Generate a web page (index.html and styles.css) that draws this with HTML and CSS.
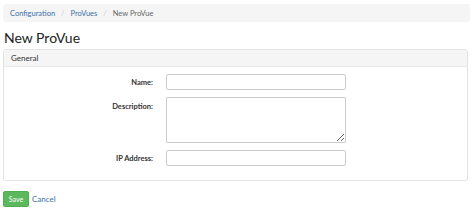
FILE: index.html
```html
<!DOCTYPE html>
<html>
    <head>
        <title>New ProVue</title>
        <link rel="stylesheet" href="styles.css">
    </head>
    <body>
        <ul class="breadcrumb">
            <li><a href="#">Configuration</a></li>
            <li class="sep">/</li>
            <li><a href="#">ProVues</a></li>
            <li class="sep">/</li>
            <li class="active">New ProVue</li>
        </ul>

        <h1>New ProVue</h1>

        <form>
            <div class="panel">
                <div class="panel-heading">General</div>
                <div class="panel-body">
                    <label for="name">Name:</label>
                    <input id="name" type="text">

                    <label for="desc" class="top">Description:</label>
                    <textarea id="desc"></textarea>

                    <label for="ip">IP Address:</label>
                    <input id="ip" type="text">
                </div>
            </div>

            <div class="actions">
                <button type="submit" class="btn-save">Save</button>
                <a href="#" class="cancel">Cancel</a>
            </div>
        </form>
    </body>
</html>
```

FILE: styles.css
```css
body {
    margin: 0;
    padding: 4px 4px 0 3px;
    font-family: 'Lato', 'Noto Sans', sans-serif;
    font-size: 8px;
    color: #333333;
    background: #ffffff;
}

a {
    color: #3a6fa8;
    text-decoration: none;
}

.breadcrumb {
    list-style: none;
    margin: 0;
    padding: 1px 7px 0 7px;
    height: 18px;
    box-sizing: border-box;
    display: flex;
    align-items: center;
    gap: 6px;
    background: #f5f5f5;
    border-radius: 3px;
    font-size: 7.5px;
}

.breadcrumb .sep {
    color: #cccccc;
}

.breadcrumb .active {
    color: #666666;
}

h1 {
    margin: 8px 0 3px 1px;
    font-size: 14px;
    font-weight: 400;
    color: #222222;
    line-height: 16px;
}

.panel {
    border: 1px solid #e3e3e3;
    border-radius: 3px;
    margin-right: 2px;
}

.panel-heading {
    background: #f5f5f5;
    border-bottom: 1px solid #e8e8e8;
    height: 16px;
    line-height: 16px;
    padding: 0 7px;
    font-size: 8px;
    color: #333333;
}

.panel-body {
    display: grid;
    grid-template-columns: 149px 180px;
    column-gap: 13px;
    row-gap: 7px;
    align-items: center;
    padding: 7px 0 14px 0;
}

label {
    text-align: right;
    font-weight: 700;
    font-size: 7.5px;
    color: #333333;
}

label.top {
    align-self: start;
    padding-top: 5px;
}

input,
textarea {
    box-sizing: border-box;
    width: 180px;
    margin: 0;
    border: 1px solid #cccccc;
    border-radius: 2px;
    background: #ffffff;
    font-family: inherit;
    font-size: 8px;
}

input {
    height: 16px;
}

textarea {
    height: 46px;
    resize: vertical;
}

.actions {
    display: flex;
    align-items: center;
    gap: 3px;
    margin-top: 10px;
}

.btn-save {
    width: 26px;
    height: 16px;
    padding: 0;
    border: 1px solid #4cae4c;
    border-radius: 2px;
    background: #5cb85c;
    color: #ffffff;
    font-family: inherit;
    font-size: 7px;
}

.cancel {
    font-size: 8px;
}
```
